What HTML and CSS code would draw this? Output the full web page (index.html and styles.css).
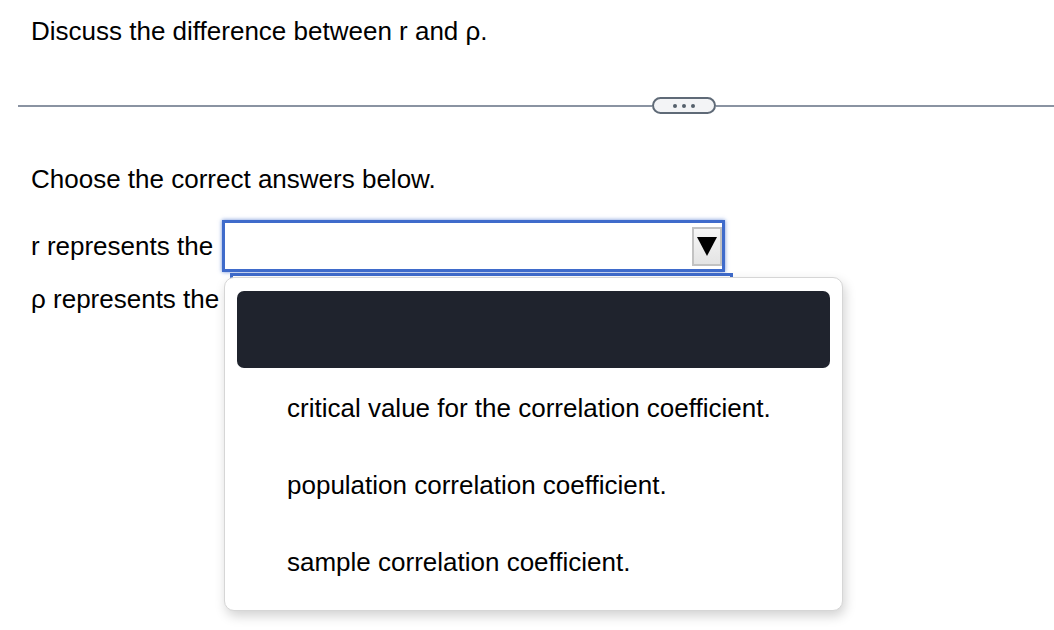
FILE: index.html
```html
<!DOCTYPE html>
<html lang="en">
<head>
    <meta charset="UTF-8">
    <meta name="viewport" content="width=device-width, initial-scale=1.0">
    <title>Discuss the difference between r and ρ</title>
    <link rel="stylesheet" href="styles.css">
</head>
<body>
    <div class="question">Discuss the difference between r and &rho;.</div>

    <div class="divider">
        <div class="divider-line left"></div>
        <div class="more-pill">
            <span class="dot"></span><span class="dot"></span><span class="dot"></span>
        </div>
        <div class="divider-line right"></div>
    </div>

    <div class="prompt">Choose the correct answers below.</div>

    <div class="answers">
        <div class="answer-row first">
            <span class="answer-label">r represents the</span>
            <div class="select focused">
                <div class="select-button"><span class="arrow"></span></div>
            </div>
        </div>
        <div class="answer-row second">
            <span class="answer-label">&rho; represents the</span>
            <div class="select">
                <div class="select-button"><span class="arrow"></span></div>
            </div>
        </div>

        <!-- open list of the first select -->
        <div class="dropdown">
            <div class="option highlighted"></div>
            <div class="option">critical value for the correlation coefficient.</div>
            <div class="option">population correlation coefficient.</div>
            <div class="option">sample correlation coefficient.</div>
        </div>
    </div>
</body>
</html>
```

FILE: styles.css
```css
body {
    margin: 0;
    font-family: "Liberation Sans", Arial, sans-serif;
    font-size: 26px;
    color: #000;
    background-color: #fff;
    min-height: 630px;
}

.question {
    padding: 16px 0 0 31px;
    line-height: 30px;
}

.divider {
    display: flex;
    align-items: center;
    margin: 51px 0 0 18px;
    height: 17px;
}

.divider-line {
    height: 2px;
    background-color: #8a93a2;
}

.divider-line.left {
    width: 634px;
}

.divider-line.right {
    flex: 1;
}

.more-pill {
    box-sizing: border-box;
    width: 64px;
    height: 17px;
    border: 2px solid #5f6a77;
    border-radius: 9px;
    background-color: #f3f4f6;
    display: flex;
    align-items: center;
    justify-content: center;
    gap: 5px;
}

.dot {
    width: 4px;
    height: 4px;
    border-radius: 50%;
    background-color: #55606c;
}

.prompt {
    margin-top: 50px;
    padding-left: 31px;
    line-height: 30px;
}

.answers {
    position: relative;
    margin-top: 26px;
    padding-left: 31px;
}

.answer-row {
    display: flex;
    align-items: center;
    height: 52px;
}

.answer-row.second {
    margin-top: 1px;
}

.answer-label {
    line-height: 52px;
    white-space: nowrap;
}

.select {
    box-sizing: border-box;
    height: 52px;
    width: 503px;
    margin-left: 9px;
    border: 3px solid #3f6bcb;
    background-color: #fff;
    display: flex;
    align-items: center;
    justify-content: flex-end;
    padding: 1px 0 0 0;
}

.answer-row.second .select {
    margin-left: 11px;
}

.select.focused {
    box-shadow: 0 0 4px rgba(63, 107, 203, 0.75);
}

.select-button {
    box-sizing: border-box;
    width: 30px;
    height: 39px;
    border: 2px solid #c2c2c2;
    background: linear-gradient(#f6f6f6, #e4e4e4);
    display: flex;
    align-items: center;
    justify-content: center;
}

.arrow {
    width: 0;
    height: 0;
    border-left: 10px solid transparent;
    border-right: 10px solid transparent;
    border-top: 19px solid #000;
}

.dropdown {
    position: absolute;
    top: 57px;
    left: 224px;
    width: 619px;
    box-sizing: border-box;
    padding: 13px 12px 11px 12px;
    background-color: #fff;
    border: 1px solid #d6d6d6;
    border-radius: 10px;
    box-shadow: 2px 5px 12px rgba(0, 0, 0, 0.18);
}

.option {
    height: 75px;
    padding: 2px 0 0 50px;
    line-height: 77px;
    white-space: nowrap;
}

.option.highlighted {
    height: 77px;
    padding-top: 0;
    background-color: #1f232d;
    border-radius: 7px;
}
```
